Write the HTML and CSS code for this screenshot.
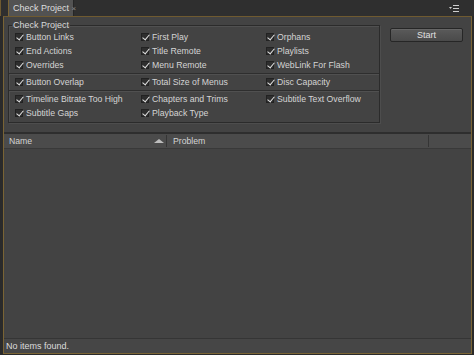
FILE: index.html
```html
<!DOCTYPE html>
<html lang="en">
<head>
	<meta charset="UTF-8">
	<title>Check Project</title>
	<link rel="stylesheet" href="styles.css">
</head>
<body>
	<div class="window">
		<div class="tabbar">
			<div class="tab">Check Project <span class="close">&times;</span></div>
			<div class="menu-btn">
				<svg width="11" height="7" viewBox="0 0 11 7">
					<path d="M0 2 L3 2 L1.5 4 Z" fill="#cfcfcf"/>
					<rect x="4" y="0" width="6" height="1" fill="#cfcfcf"/>
					<rect x="4" y="3" width="6" height="1" fill="#cfcfcf"/>
					<rect x="4" y="6" width="6" height="1" fill="#cfcfcf"/>
				</svg>
			</div>
		</div>
		<div class="panel">
			<div class="top">
				<fieldset class="checks">
					<legend>Check Project</legend>
					<div class="group">
						<label class="chk"><i></i>Button Links</label>
						<label class="chk"><i></i>First Play</label>
						<label class="chk"><i></i>Orphans</label>
						<label class="chk"><i></i>End Actions</label>
						<label class="chk"><i></i>Title Remote</label>
						<label class="chk"><i></i>Playlists</label>
						<label class="chk"><i></i>Overrides</label>
						<label class="chk"><i></i>Menu Remote</label>
						<label class="chk"><i></i>WebLink For Flash</label>
					</div>
					<div class="group">
						<label class="chk"><i></i>Button Overlap</label>
						<label class="chk"><i></i>Total Size of Menus</label>
						<label class="chk"><i></i>Disc Capacity</label>
					</div>
					<div class="group">
						<label class="chk"><i></i>Timeline Bitrate Too High</label>
						<label class="chk"><i></i>Chapters and Trims</label>
						<label class="chk"><i></i>Subtitle Text Overflow</label>
						<label class="chk"><i></i>Subtitle Gaps</label>
						<label class="chk"><i></i>Playback Type</label>
					</div>
				</fieldset>
				<button class="start">Start</button>
			</div>
			<div class="list">
				<div class="list-head">
					<div class="col-name">Name <span class="sort"></span></div>
					<div class="col-problem">Problem</div>
					<div class="col-rest"></div>
				</div>
				<div class="list-body"></div>
				<div class="status">No items found.</div>
			</div>
		</div>
	</div>
</body>
</html>
```

FILE: styles.css
```css
*{
	box-sizing: border-box;
}
body{
	margin:0;
	background:#2a2a2a;
	font-family:"Liberation Sans", Arial, sans-serif;
	font-size:8.7px;
	color:#d4d4d4;
}
.window{
	width:474px;
	height:355px;
	overflow:hidden;
}
.tabbar{
	height:16px;
	display:flex;
	align-items:stretch;
	padding-left:3px;
	background:#2f2f2f;
	border-left:1px solid #6f5a30;
}
.tab{
	margin-left:4px;
	width:66px;
	padding-left:4px;
	line-height:16px;
	font-size:9px;
	color:#dedede;
	background:#525252;
	border-left:1px solid #7a6434;
	border-right:1px solid #262626;
	white-space:nowrap;
}
.close{
	color:#8c8c8c;
	font-size:8px;
}
.menu-btn{
	margin-left:auto;
	margin-right:14px;
	display:flex;
	align-items:center;
}
.panel{
	margin-left:3px;
	width:469px;
	height:338px;
	background:#434343;
	border:1px solid #7a6434;
	border-top-color:#6f5a30;
	display:flex;
	flex-direction:column;
}
.top{
	display:flex;
	align-items:flex-start;
	padding:5px 0 0 4px;
}
.checks{
	margin:0;
	width:372px;
	padding:1px 0 2px 0;
	border:1px solid #2b2b2b;
	box-shadow:inset 1px 1px 0 #505050, 1px 1px 0 #4d4d4d;
}
.checks legend{
	padding:0 1px;
	margin-left:3px;
	line-height:7px;
	font-size:9px;
	color:#d8d8d8;
}
.group{
	display:grid;
	grid-template-columns:126px 125px 1fr;
	padding-left:5px;
}
.group + .group{
	border-top:1px solid #2e2e2e;
	box-shadow:inset 0 1px 0 #505050;
	padding-top:1px;
	margin-top:1px;
}
.chk{
	height:14px;
	display:flex;
	align-items:center;
	white-space:nowrap;
}
.chk i{
	width:8px;
	height:8px;
	margin:0 3px 0 1px;
	background:#2e2e2e;
	border:1px solid #222;
	position:relative;
}
.chk i:after{
	content:"";
	position:absolute;
	left:2px;
	top:-1px;
	width:3px;
	height:6px;
	border-right:1.5px solid #e2e2e2;
	border-bottom:1.5px solid #e2e2e2;
	transform:rotate(40deg);
}
.start{
	margin:6px 0 0 10px;
	width:73px;
	height:14px;
	padding:0;
	font-family:inherit;
	font-size:9px;
	color:#e0e0e0;
	background:linear-gradient(#5a5a5a, #4a4a4a);
	border:1px solid #262626;
	border-radius:2px;
	box-shadow:inset 0 1px 0 #666;
}
.list{
	margin-top:9px;
	flex:1;
	display:flex;
	flex-direction:column;
}
.list-head{
	height:17px;
	display:flex;
	align-items:center;
	background:#4b4b4b;
	border-top:2px solid #2e2e2e;
	border-bottom:1px solid #393939;
}
.col-name{
	width:163px;
	padding-left:5px;
	display:flex;
	align-items:center;
	border-right:1px solid #353535;
	height:12px;
}
.sort{
	margin-left:auto;
	margin-right:2px;
	width:0;
	height:0;
	border-left:5px solid transparent;
	border-right:5px solid transparent;
	border-bottom:4px solid #bdbdbd;
}
.col-problem{
	width:262px;
	padding-left:6px;
	height:12px;
	display:flex;
	align-items:center;
	border-right:1px solid #353535;
}
.list-body{
	flex:1;
	background:#434343;
}
.status{
	height:15px;
	line-height:14px;
	padding-left:2px;
	font-size:9px;
	color:#dcdcdc;
	background:#464646;
	border-top:1px solid #353535;
}
```
